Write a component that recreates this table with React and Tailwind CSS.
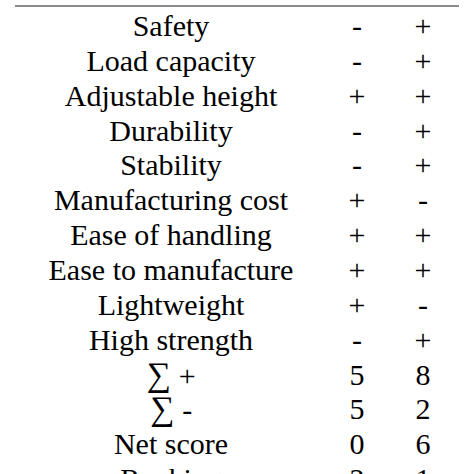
const rows = [
  ['Safety', '-', '+'],
  ['Load capacity', '-', '+'],
  ['Adjustable height', '+', '+'],
  ['Durability', '-', '+'],
  ['Stability', '-', '+'],
  ['Manufacturing cost', '+', '-'],
  ['Ease of handling', '+', '+'],
  ['Ease to manufacture', '+', '+'],
  ['Lightweight', '+', '-'],
  ['High strength', '-', '+'],
  ['Σ+', '5', '8'],
  ['Σ-', '5', '2'],
  ['Net score', '0', '6'],
  ['Ranking', '2', '1'],
];

function Label({ text }) {
  if (text.startsWith('Σ')) {
    return (
      <div>
        <span className="inline-block text-[34px] leading-none">{'\u2211'}</span>
        <span className="ml-[8px]">{text.slice(1)}</span>
      </div>
    );
  }
  return <div>{text}</div>;
}

export default function App() {
  return (
    <div className="h-[474px] w-[474px] overflow-hidden bg-white text-black">
      <div className="ml-[15px] w-[444px] pt-[5px] font-['Liberation_Serif',serif] text-[30px] leading-[34.86px]">
        <div className="h-[2px] bg-[#8a8a8a]" />
        <div className="mt-[2px]">
          {rows.map(([label, a, b]) => (
            <div key={label} className="grid h-[34.86px] grid-cols-[312px_60px_72px] text-center">
              <Label text={label} />
              <div>{a}</div>
              <div>{b}</div>
            </div>
          ))}
        </div>
      </div>
    </div>
  );
}
